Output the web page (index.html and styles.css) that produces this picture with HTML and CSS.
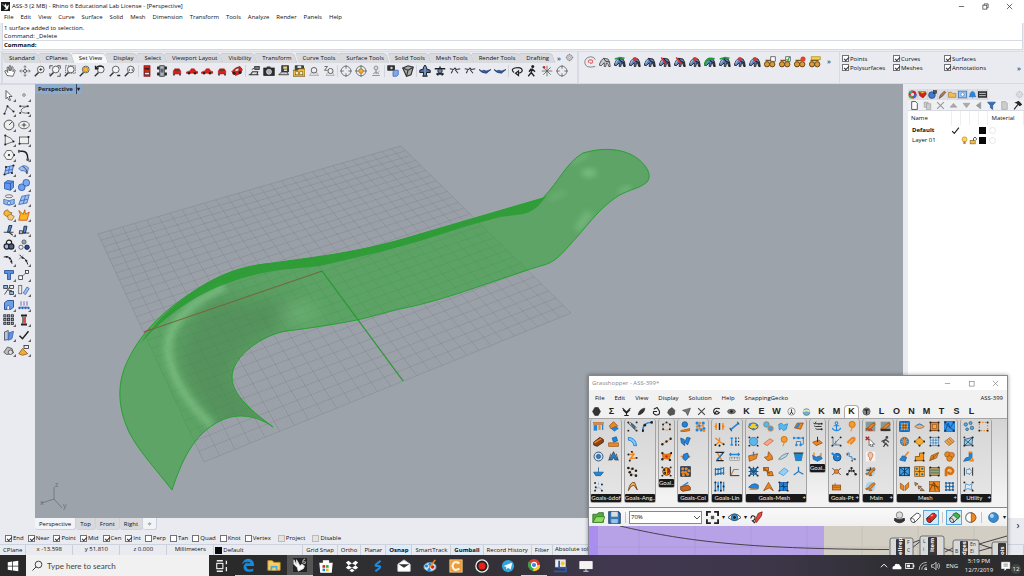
FILE: index.html
```html
<!DOCTYPE html>
<html lang="en">
<head>
<meta charset="utf-8">
<title>ASS-3 (2 MB) - Rhino 6 Educational Lab License - [Perspective]</title>
<link rel="stylesheet" href="styles.css">
</head>
<body>
<div class="desktop">
  <main class="rhino">
    <header class="titlebar">
      <span class="icon" data-icon="rhino"></span>
      <span class="grow">ASS-3 (2 MB) - Rhino 6 Educational Lab License - [Perspective]</span>
      <div class="window-buttons"><button aria-label="Minimize" data-icon="min"></button><button aria-label="Restore" data-icon="restore"></button><button aria-label="Close" data-icon="close"></button></div>
    </header>
    <nav class="menu">
      <button>File</button><button>Edit</button><button>View</button><button>Curve</button><button>Surface</button><button>Solid</button><button>Mesh</button><button>Dimension</button><button>Transform</button><button>Tools</button><button>Analyze</button><button>Render</button><button>Panels</button><button>Help</button>
    </nav>
    <section class="command">
      <div class="history">1 surface added to selection.<br>Command: _Delete</div>
      <div class="prompt"><label for="cmd">Command:</label><input id="cmd" type="text"></div>
    </section>
    <section class="toolbars">
      <div class="toolbar-main">
        <div class="tabs">
          <button>Standard</button><button>CPlanes</button><button class="active">Set View</button><button>Display</button><button>Select</button><button>Viewport Layout</button><button>Visibility</button><button>Transform</button><button>Curve Tools</button><button>Surface Tools</button><button>Solid Tools</button><button>Mesh Tools</button><button>Render Tools</button><button>Drafting</button>
          <button class="more">»</button><button class="more" aria-label="Options" data-icon="gear"></button>
        </div>
        <div class="tool-row" data-icons="hand pan zoom zoomext zoomwin zoomsel undoview zoomout zoom1 | cartop wheels carfront carside carside carfront car3d | projector camera save savefolder cone cone2 | target targety lamp | camcube cubewire | planetop planefront planeside planeside jet jet | rotate walk star target"></div>
      </div>
      <div class="toolbar-gh tool-row" data-icons="rhinored hopper hopg hopr hopb hopx hopx hopr hopbig hopg hopr hopr gecko geckoc geckor geckoy"></div>
      <span class="chevrons">»</span>
      <fieldset class="filters">
        <label><input type="checkbox" checked>Points</label><label><input type="checkbox" checked>Curves</label><label><input type="checkbox" checked>Surfaces</label>
        <label><input type="checkbox" checked>Polysurfaces</label><label><input type="checkbox" checked>Meshes</label><label><input type="checkbox" checked>Annotations</label>
      </fieldset>
      <span class="chevrons low">»</span>
    </section>
    <section class="workspace">
      <aside class="sidebar" data-icons="arrow point polyline curve circle ellipse arc rect polygon fillet patch sweep cube spheres cylinder plane puzzle explode trim split union group bend blend text scale array flow solid project grid column mirror check sheets paint"></aside>
      <div class="center">
        <div class="viewport">
          <svg class="scene" viewBox="35 84 868 434" preserveAspectRatio="xMidYMid slice" aria-label="Perspective view">
            <defs>
              <clipPath id="body"><path id="bodyPath" d="M172 490 C154 467 138 450 129 432 C116 404 118 380 128 360 C142 330 169 305 207 283 C230 270 250 265 273 263 L323 256 C356 251 388 244 420 234 L543 198 C560 180 566 163 583 153 C597 149 614 147 630 154 C643 160 654 174 647 182 C639 189 630 189 618 196 C600 208 591 221 577 237 C565 250 558 260 547 264 C502 277 448 300 400 309 C386 312 371 317 357 320 C332 325 310 328 287 331 C264 334 232 356 232 377 C232 395 253 412 273 427 C258 416 238 412 220 421 C193 434 181 463 172 490Z"/></clipPath>
              <filter id="soft" x="-50%" y="-50%" width="200%" height="200%"><feGaussianBlur stdDeviation="5"/></filter>
              <filter id="soft2" x="-50%" y="-50%" width="200%" height="200%"><feGaussianBlur stdDeviation="9"/></filter>
              <filter id="soft3" x="-50%" y="-50%" width="200%" height="200%"><feGaussianBlur stdDeviation="3"/></filter>
            </defs>
            <g id="grid"></g>
            <use href="#bodyPath" fill="#24a42a" fill-opacity=".53"/>
            <g clip-path="url(#body)">
              <path d="M212 300 Q176 330 182 365 Q188 395 220 425 L275 430 L232 380 Q232 350 275 332 L300 300 Z" fill="#4c7650" opacity=".38" filter="url(#soft2)"/>
              <path d="M225 286 Q165 315 168 352 Q174 390 212 426" fill="none" stroke="#98d59b" stroke-width="8" opacity=".5" filter="url(#soft3)"/>
              <ellipse cx="298" cy="313" rx="20" ry="9" fill="#98d59b" opacity=".34" filter="url(#soft2)"/>
              <ellipse cx="589" cy="173" rx="8" ry="4" fill="#98d59b" opacity=".55" filter="url(#soft3)"/>
              <path d="M549 199 L566 192" stroke="#98d59b" stroke-width="2" opacity=".6" filter="url(#soft3)"/>
              <path d="M577 230 L590 212" stroke="#98d59b" stroke-width="8" opacity=".4" filter="url(#soft3)"/>
              <path d="M619 193 L630 187" stroke="#98d59b" stroke-width="4" opacity=".6" filter="url(#soft3)"/>
              <path d="M571 163 L588 154" stroke="#98d59b" stroke-width="3" opacity=".6" filter="url(#soft3)"/>
            </g>
            <path d="M140 344 C158 318 178 300 207 283 C230 270 250 265 273 263 L323 256 C356 251 388 244 420 234 L543 198 L547 195 C541 203 536 211 523 214 L500 217 L467 226 L420 241 L380 252 L320 266 L280 270 C245 275 220 285 197 297 C172 312 155 327 140 344Z" fill="#249b2c" fill-opacity=".78"/>
            <use href="#bodyPath" fill="none" stroke="#28a032" stroke-width="1"/>
            <path d="M322 271 L144 332" stroke="#78653a" fill="none"/><path d="M151 329 L144 332" stroke="#a54b45"/>
            <path d="M322 271 L403 381" stroke="#229b2c" fill="none" stroke-width="1.2"/>
            <g stroke="#6c7075" stroke-width=".8" fill="none"><path d="M54 499V487M54 499L42 503M54 499L62 508"/></g>
            <g class="axis"><text x="55" y="487">z</text><text x="40" y="505">x</text><text x="63" y="508">y</text></g>
          </svg>
          <button class="view-title"><span>Perspective</span><i>▾</i></button>
        </div>
        <div class="view-tabs"><button class="active">Perspective</button><button>Top</button><button>Front</button><button>Right</button><button class="active" aria-label="New viewport">✧</button></div>
      </div>
      <aside class="layers">
        <div class="panel-tabs"><div class="panel-tab-list" data-icons="wheel shield sphereg brush folder image bell kbd"></div><button class="panel-gear" aria-label="Panel options" data-icon="gear"></button></div>
        <div class="panel-tools" data-icons="page copy cross up down left filter pageg hammer"></div>
        <table>
          <thead><tr><th class="name">Name</th><th></th><th></th><th></th><th></th><th class="material">Material</th></tr></thead>
          <tbody>
            <tr class="current"><td>Default</td><td data-icon="check"></td><td></td><td></td><td><i class="swatch"></i></td><td><i class="dot"></i></td></tr>
            <tr><td>Layer 01</td><td></td><td data-icon="bulb"></td><td data-icon="lock"></td><td><i class="swatch"></i></td><td><i class="dot"></i></td></tr>
          </tbody>
        </table>
        <button class="scroll-right" aria-label="Scroll right">›</button>
      </aside>
    </section>
    <section class="osnap">
      <label><input type="checkbox" checked>End</label><label><input type="checkbox" checked>Near</label><label><input type="checkbox" checked>Point</label><label><input type="checkbox" checked>Mid</label><label><input type="checkbox" checked>Cen</label><label><input type="checkbox" checked>Int</label><label><input type="checkbox">Perp</label><label><input type="checkbox">Tan</label><label><input type="checkbox">Quad</label><label><input type="checkbox">Knot</label><label><input type="checkbox">Vertex</label><label class="wide"><input type="checkbox" disabled>Project</label><label class="wide"><input type="checkbox" disabled>Disable</label>
    </section>
    <footer class="status">
      <button class="cplane">CPlane</button><span class="cell">x -13.598</span><span class="cell">y 51.810</span><span class="cell">z 0.000</span><span class="cell">Millimeters</span><button class="layer"><i class="swatch"></i>Default</button><button>Grid Snap</button><button>Ortho</button><button>Planar</button><button class="on">Osnap</button><button>SmartTrack</button><button class="on">Gumball</button><button>Record History</button><button>Filter</button><span class="rest">Absolute tolerance</span>
    </footer>
  </main>

  <section class="gh">
    <header class="gh-title"><span class="grow">Grasshopper - ASS-399*</span><div class="window-buttons"><button aria-label="Minimize" data-icon="min"></button><button aria-label="Maximize" data-icon="max"></button><button aria-label="Close" data-icon="close"></button></div></header>
    <nav class="gh-menu"><button>File</button><button>Edit</button><button>View</button><button>Display</button><button>Solution</button><button>Help</button><button>SnappingGecko</button><span class="grow"></span><span>ASS-399</span></nav>
    <div class="gh-tabs">
      <button data-icon="hex"></button><button>Σ</button><button data-icon="sprout"></button><button data-icon="leafd"></button><button data-icon="swirl"></button><button data-icon="blob"></button><button data-icon="tri"></button><button data-icon="cut"></button><button data-icon="swirl2"></button><button data-icon="eyed"></button><button>K</button><button>E</button><button>W</button><button data-icon="person"></button><button data-icon="globe"></button><button>K</button><button>M</button><button class="active">K</button><button data-icon="stamp"></button><button>L</button><button>O</button><button>N</button><button>M</button><button>T</button><button>S</button><button>L</button>
    </div>
    <div class="ribbon">
      <div class="group two"><div class="cells" data-icons="hang roof beam ramp ring frame boat - dots -"></div><button>Goals-6dof</button></div>
      <div class="group two"><div class="cells" data-icons="angle bow arcb - zig - steps - arch -"></div><button>Goals-Ang..</button></div>
      <div class="group one"><div class="cells" data-icons="ringd lined pillow bug"></div><button>Goal..</button></div>
      <div class="group two"><div class="cells" data-icons="ballbar molecules folded - cubearrow - mosaic - box -"></div><button>Goals-Col</button></div>
      <div class="group two"><div class="cells" data-icons="spread segment yjoint vbars hourglass ruler fence graph grille -"></div><button>Goals-Lin</button></div>
      <div class="group four"><div class="cells" data-icons="blobY hexes fold sheet bubble eraser balloon netb slab flame wing bucket meshb blocks soap spike rollb roofo squareb -"></div><button><span>Goals-Mesh</span><b>+</b></button></div>
      <div class="group one"><div class="cells" data-icons="anglesk floor pinfloor"></div><button>Goal..</button></div>
      <div class="group two"><div class="cells" data-icons="anchor balloon anchorv magnet coil springs knot dome brick -"></div><button><span>Goals-Pt</span><b>+</b></button></div>
      <div class="group two"><div class="cells" data-icons="roo rooN clickx runner ear - roobar - rooplain -"></div><button><span>Main</span><b>+</b></button></div>
      <div class="group four"><div class="cells" data-icons="checker saucer oframe meshb2 wheelo diamond gridb weave broom lshape leafo trio xmesh quads striped spiral fold2 tris mesho nodes"></div><button><span>Mesh</span><b>+</b></button></div>
      <div class="group two"><div class="cells" data-icons="pts dashed cross4 - stairs - boxarr - hull -"></div><button><span>Utility</span><b>+</b></button></div>
    </div>
    <div class="gh-tools">
      <button aria-label="Open" data-icon="open"></button><button aria-label="Save" data-icon="save2"></button><i class="rule"></i>
      <select aria-label="Zoom"><option>70%</option></select>
      <button aria-label="Zoom extents" data-icon="extents"></button><i class="drop">▾</i><button aria-label="Preview" data-icon="eye"></button><i class="drop">▾</i><button aria-label="Sketch" data-icon="pencil"></button>
      <span class="grow"></span>
      <button aria-label="No preview" data-icon="nopreview"></button><button aria-label="Wireframe" data-icon="wirecan"></button><button class="sel" aria-label="Shaded" data-icon="redcan"></button><i class="rule"></i><button class="sel" aria-label="Selected only" data-icon="greencan"></button><button aria-label="Document preview" data-icon="half"></button><i class="rule"></i><button aria-label="Mesh quality" data-icon="blueball"></button><i class="drop">▾</i>
    </div>
    <div class="canvas">
      <svg viewBox="589 526 418 29" preserveAspectRatio="xMinYMin slice" aria-label="Definition canvas">
        <path d="M589 526H1007V555H589Z" fill="#d2cec3"/>
        <path d="M589 526H824V555H589Z" fill="#b7a2e8"/><path d="M589 526H598V555H589Z" fill="#a98ef0"/>
        <path d="M639 526V555M695 526V555M751 526V555M807 526V555M598 547H824" stroke="#aa96d8" stroke-width=".6"/>
        <path d="M862 526V555M918 526V555M974 526V555M824 547H1007" stroke="#c2beb2" stroke-width=".6"/>
        <g stroke="#454148" fill="none"><path d="M620 526C680 540 740 549 889 549.500M912 543L920 540M912 548L922 540M943 548L954 552M945 552L953 548M979 544L1007 536M979 544L994 549M979 551L1007 543"/></g>
        <g fill="#d9d9d9" stroke="#555" stroke-width=".8"><rect x="890" y="538" width="23" height="22" rx="2"/><rect x="920" y="536" width="24" height="22" rx="2"/><rect x="953" y="540" width="26" height="22" rx="2"/><rect x="992" y="542" width="20" height="20" rx="2"/></g>
        <g fill="#383838"><rect x="896" y="539" width="9" height="20" rx="1"/><rect x="928" y="537" width="9" height="20" rx="1"/><rect x="960" y="541" width="8" height="20" rx="1"/><rect x="998" y="543" width="8" height="20" rx="1"/></g>
        <g class="node"><text transform="translate(902 555) rotate(-90)">ellrep</text><text transform="translate(934 552) rotate(-90)">Item</text><text transform="translate(966 555) rotate(-90)">dges</text><text transform="translate(1004 555) rotate(-90)">ois</text></g>
        <g class="port"><text x="907" y="544">F</text><text x="907" y="552">C</text><text x="923" y="543">L</text><text x="923" y="551">i</text><text x="970" y="546">En</text><text x="970" y="553">Ei</text><text x="955" y="553">B</text></g>
      </svg>
    </div>
  </section>

  <footer class="taskbar">
    <button class="start" aria-label="Start" data-icon="windows"></button>
    <label class="search"><span class="icon" data-icon="lens"></span><input type="text" aria-label="Search" placeholder="Type here to search"></label>
    <div class="apps">
      <button aria-label="Task view" data-icon="taskview"></button><button class="open" aria-label="Edge" data-icon="edge"></button><button class="open" aria-label="File Explorer" data-icon="explorer"></button><button class="open current" aria-label="Rhino" data-icon="rhino6"></button><button aria-label="Store" data-icon="store"></button><button aria-label="Dropbox" data-icon="dropbox"></button><button aria-label="Swift" data-icon="bolt"></button><button aria-label="Mail" data-icon="mail"></button><button aria-label="Paint" data-icon="palette"></button><button aria-label="Camtasia" data-icon="camtasia"></button><button aria-label="Recorder" data-icon="record"></button><button aria-label="Telegram" data-icon="telegram"></button><button class="open" aria-label="Chrome" data-icon="chrome"></button><button aria-label="Python" data-icon="python"></button><button aria-label="Display" data-icon="monitor"></button>
    </div>
    <span class="grow"></span>
    <div class="tray"><button aria-label="Hidden icons" data-icon="caret"></button><button aria-label="OneDrive" data-icon="cloud"></button><button aria-label="Battery" data-icon="battery"></button><button aria-label="Network" data-icon="wifi"></button><button aria-label="Volume" data-icon="volume"></button><button class="lang">ENG</button><button class="clock">5:19 PM<br>12/7/2019</button><button class="notice" aria-label="12 notifications"><span class="icon" data-icon="note"></span><b>12</b></button></div>
  </footer>
</div>
<script src="app.js"></script>
</body>
</html>
```

FILE: styles.css
```css
* { box-sizing: border-box; }
html, body { margin: 0; height: 100%; }
body { font: 6px/8px "Open Sans", "Noto Sans", sans-serif; color: #0c0e12; overflow: hidden; }
button { font: inherit; color: inherit; background: none; border: 0; padding: 0; margin: 0; white-space: nowrap; }
input, select { font: inherit; color: inherit; }
i { font-style: normal; }
svg { display: block; }
.grow { flex: 1; }
.desktop { position: relative; display: flex; flex-direction: column; height: 100vh; min-height: 400px; }
.rhino { flex: 1; min-height: 0; display: flex; flex-direction: column; background: #e9ebf1; }
.glyph { width: 12px; height: 12px; margin: auto; flex: none; }

.titlebar { display: flex; align-items: center; height: 12px; padding: 0 3px 0 1px; background: #fff; white-space: nowrap; }
.titlebar .glyph { width: 9px; height: 9px; margin-right: 2px; }
.window-buttons { display: flex; }
.window-buttons button { width: 24px; height: 11px; display: flex; }
.window-buttons .glyph, .titlebar .window-buttons .glyph { width: 7px; height: 7px; margin: auto; }
.menu { display: flex; gap: 7px; height: 11px; padding-left: 4px; background: #fff; }
.menu button { line-height: 11px; }

.command { margin: 0 1px 1px 2px; border: 1px solid #d3d8e3; border-top: 0; background: #fff; white-space: nowrap; }
.history { padding: 1px 0 0 1px; line-height: 8px; border-bottom: 1px solid #d7dbe4; }
.prompt { display: flex; padding-left: 1px; font-weight: bold; height: 8px; }
.prompt input { flex: 1; border: 0; padding: 0 2px; height: 7px; outline: 0; background: none; }

.toolbars { display: flex; height: 33px; border-top: 1px solid #d9dde6; border-bottom: 1px solid #d5dae4; }
.toolbar-main { width: 578px; border-left: 2px solid #d6dbe5; margin-left: 1px; border-right: 2px solid #d6dbe5; }
.tabs { display: flex; height: 11px; }
.tabs button { position: relative; z-index: 0; height: 11px; padding: 0 5px 0 6px; line-height: 12px; }
.tabs button::before { content: ""; position: absolute; z-index: -1; inset: 1px 0 0; background: #d9dade; border: 1px solid #c9ccd3; border-width: 1px 1px 0 0; border-radius: 2px 4px 0 0; transform: skewX(18deg); }
.tabs .active::before { background: #f7f8fa; }
.tabs .more { padding: 0 1px 0 3px; font-size: 8px; }
.tabs .more::before { display: none; }
.tabs .more .glyph { width: 9px; height: 9px; }
.tool-row { display: flex; align-items: center; gap: 1px; }
.tool-row button { width: 14px; height: 15px; display: flex; }
.tool-row .sep { width: 1px; height: 12px; background: #cfd3dc; }
.toolbar-gh { padding-left: 4px; height: 19px; }
.chevrons { padding: 5px 8px 0 5px; font-size: 8px; }
.chevrons.low { padding-top: 12px; margin-left: auto; padding-right: 3px; }
.filters { border: 0; border-left: 1px solid #d5dae4; margin: 0; padding: 2px 0 0 2px; display: grid; grid-template-columns: repeat(3, 51px); align-content: start; min-width: 0; }
.filters label { height: 9px; }
label { display: flex; align-items: center; gap: 1px; white-space: nowrap; }
input[type="checkbox"] { appearance: none; width: 7px; height: 7px; margin: 0; border: 1px solid #70737a; background: #fff; display: grid; }
input[type="checkbox"]:checked::before { content: ""; width: 4px; height: 2px; margin: 1px 0 0 1px; border: solid #333; border-width: 0 0 1px 1px; transform: rotate(-45deg); }
input[type="checkbox"]:disabled { border-color: #bbb; background: #e3e3e3; }

.workspace { flex: 1; min-height: 0; display: flex; }
.sidebar { width: 35px; padding: 2px 3px 0 1px; display: grid; grid-template-columns: 15px 15px; grid-auto-rows: 15px; align-content: start; border-top: 1px solid #d5dae4; }
.sidebar button { position: relative; display: flex; }
.sidebar button::after { content: ""; position: absolute; right: 0; bottom: 0; border: solid transparent; border-width: 3px 0 0 3px; border-right: 0; border-bottom: 3px solid #666; border-top: 0; }
.center { flex: 1; min-width: 0; display: flex; flex-direction: column; }
.viewport { position: relative; flex: 1; min-height: 0; background: #9da3ab; overflow: hidden; }
.scene { width: 100%; height: 100%; }
.axis { font-size: 7px; fill: #696d72; }
.view-title { position: absolute; top: 0; left: 0; display: flex; gap: 3px; height: 10px; padding: 0 1px 0 3px; line-height: 10px; background: #8eabcb; font-weight: bold; color: #17202c; }
.view-title i { border-left: 1px solid #345; }
.view-tabs { display: flex; height: 14px; }
.view-tabs button { height: 12px; line-height: 12px; padding: 0 4px; background: #d9dade; border: 1px solid #cdd1d9; border-top: 0; border-left: 0; border-radius: 0 0 3px 3px; }
.view-tabs .active { background: #f3f4f7; }

.layers { width: 121px; padding: 5px 0 0 5px; display: flex; flex-direction: column; }
.panel-tabs { display: flex; justify-content: space-between; height: 11px; }
.panel-tab-list { display: flex; }
.panel-tabs button { width: 10px; display: flex; background: #dcdee3; border: 1px solid #cfd2d9; border-width: 0 1px 0 0; }
.panel-tabs .panel-gear { background: none; border: 0; opacity: .4; }
.panel-tabs .glyph { width: 9px; height: 9px; }
.panel-tools { display: flex; height: 11px; background: #eff0f3; border-bottom: 1px solid #d8dbe1; }
.panel-tools button { width: 13px; display: flex; }
.panel-tools .glyph { width: 9px; height: 9px; }
table { border-collapse: collapse; table-layout: fixed; width: 100%; background: #fff; }
th { font-weight: normal; text-align: left; height: 14px; width: 9px; padding: 0; border-right: 1px solid #eceef1; }
th.name { width: 43px; padding-left: 3px; }
th.material { width: auto; padding-left: 4px; }
td { height: 10px; padding: 0; line-height: 8px; white-space: nowrap; }
td:first-child { padding-left: 4px; }
td .glyph { width: 9px; height: 9px; }
.current { font-weight: bold; }
.swatch { display: block; width: 7px; height: 7px; background: #090909; margin-left: 1px; }
.dot { display: block; width: 7px; height: 7px; border: 1px solid #e6e6e6; border-radius: 50%; margin-left: 2px; }
.layers table { flex: none; }
.layers::after { content: ""; order: 1; flex: 1; background: #fff; }
.scroll-right { order: 2; height: 14px; align-self: flex-end; width: 12px; font-size: 10px; }

.osnap { display: flex; gap: 4px; height: 12px; padding-left: 5px; align-items: center; }
.osnap .wide { margin-left: 3px; }
.status { display: flex; height: 11px; border-top: 1px solid #cdd3de; white-space: nowrap; overflow: hidden; }
.status > * { border-right: 1px solid #c9cfdb; padding: 0 3px; line-height: 9px; text-align: center; }
.status .cplane { padding: 0 3px; }
.status .cell { width: 47px; }
.status .layer { width: 89px; display: flex; align-items: center; gap: 1px; padding: 0; }
.status .on { font-weight: bold; background: #dfebf6; }
.status .rest { flex: 1; text-align: left; padding-left: 2px; }

.gh { position: absolute; right: 16px; bottom: 21px; width: 420px; max-width: 96%; background: #f1f1f2; border: 1px solid #85888e; border-bottom: 0; box-shadow: 0 0 4px #0006; display: flex; flex-direction: column; overflow: hidden; }
.gh-title { display: flex; height: 14px; padding-left: 3px; align-items: center; background: #fff; color: #85878c; }
.gh-title .window-buttons button { width: 24px; }
.gh-title .window-buttons { opacity: .6; }
.gh-menu { display: flex; height: 15px; line-height: 16px; gap: 10px; padding: 0 4px 0 6px; }
.gh-tabs { display: flex; height: 13px; }
.gh-tabs button { width: 15px; height: 13px; display: flex; justify-content: center; font: bold 9px/13px "Liberation Sans", sans-serif; color: #222; }
.gh-tabs .active { background: #fdfdfd; border: 1px solid #aaa; border-bottom: 0; border-radius: 4px 4px 0 0; line-height: 11px; }
.gh-tabs .glyph { width: 9px; height: 9px; }
.ribbon { display: flex; align-items: flex-start; gap: 2px; padding: 0 1px; height: 90px; background: linear-gradient(#d4d4d4, #f3f3f3 90%); border-top: 1px solid #a5a5a5; border-bottom: 1px solid #888; }
.group { border: 1px solid #a3a3a3; border-top: 0; border-radius: 3px; background: linear-gradient(#d6d6d6, #e6e6e6); flex: none; }
.cells { display: grid; grid-auto-rows: 15px; height: 75px; }
.one { width: 17px; } .two { width: 32px; } .four { width: 62px; }
.one .cells { grid-template-columns: 1fr; height: auto; }
.two .cells { grid-template-columns: 1fr 1fr; }
.four .cells { grid-template-columns: repeat(4, 1fr); }
.cells button { display: flex; min-width: 0; }
.cells .glyph { width: 11px; height: 11px; }
.group > button { display: flex; justify-content: center; width: 100%; height: 8px; background: #191919; color: #f1f1f1; font: 6px/7px Lato, sans-serif; border-radius: 1px; }
.group > button span { flex: 1; text-align: center; }
.group > button b { font-weight: normal; }
.gh-tools { display: flex; align-items: center; height: 18px; padding: 0 0 0 1px; background: linear-gradient(#fafafa, #efefef); }
.gh-tools button { width: 16px; height: 15px; display: flex; }
.gh-tools .glyph { width: 13px; height: 13px; }
.gh-tools .sel { border: 1px solid #5aaade; background: #d6eafa; }
.gh-tools .rule { width: 1px; height: 11px; background: #c5c5c5; margin: 0 3px; }
.gh-tools .drop { width: 6px; text-align: center; line-height: 8px; }
.gh-tools select { appearance: none; width: 73px; height: 13px; border: 1px solid #888; padding: 0 0 0 1px; background: linear-gradient(45deg, transparent 35%, #555 35%, #555 65%, transparent 65%) 64px 4px / 3px 3px no-repeat, linear-gradient(-45deg, transparent 35%, #555 35%, #555 65%, transparent 65%) 67px 4px / 3px 3px no-repeat, #fff; margin-right: 2px; }
.canvas { height: 29px; background: #d2cec3; }
.canvas svg { width: 100%; height: 29px; }
.node { font-size: 6px; font-weight: bold; fill: #fff; }
.port { font-size: 5px; fill: #333; }

.taskbar { position: relative; display: flex; flex: none; height: 21px; color: #f1f1f1; background: linear-gradient(90deg, #292929 20%, #343238 50%, #413850 60%, #3d3649 75%, #2d2d2f 90%); }
.taskbar button { display: flex; align-items: center; }
.start { width: 26px; }
.search { width: 183px; background: #f1f1f1; color: #444; padding-left: 5px; gap: 4px; font: 8px/10px Lato, sans-serif; }
.search input { flex: 1; min-width: 0; border: 0; background: none; padding: 0; outline: 0; }
.search input::placeholder { color: #444; opacity: 1; }
.apps { display: flex; }
.apps button { width: 26px; }
.apps .open { border-bottom: 1px solid #f0d68a; }
.apps .current { background: #555; }
.apps .glyph { width: 14px; height: 14px; }
.tray { display: flex; padding-right: 3px; }
.tray button { width: 13px; }
.tray .glyph { width: 10px; height: 10px; }
.tray .lang { width: 20px; justify-content: center; }
.tray .clock { width: 34px; justify-content: center; line-height: 9px; text-align: center; }
.tray .notice { position: relative; width: 25px; padding-left: 5px; }
.notice b { position: absolute; right: 0; bottom: 2px; width: 10px; height: 10px; border-radius: 50%; background: #444; line-height: 10px; font-weight: normal; }
```

FILE: app.js
```js
const B = '#1f86e0', O = '#ee8722', K = '#222', G = '#777', N = '#3563b8', L = '#9fbfec', RD = '#dd1f17';
const p = (d, f = 'none', s = K, w = 1) => `<path d="${d}" fill="${f}" stroke="${s}" stroke-width="${w}"/>`;
const c = (x, y, r, f = 'none', s = K, w = 1) => `<circle cx="${x}" cy="${y}" r="${r}" fill="${f}" stroke="${s}" stroke-width="${w}"/>`;
const r = (x, y, w, h, f = 'none', s = K, sw = 1) => `<rect x="${x}" y="${y}" width="${w}" height="${h}" fill="${f}" stroke="${s}" stroke-width="${sw}"/>`;
const d = (pts, f = K, q = 1.4) => pts.map(([x, y]) => c(x, y, q, f, 'none')).join('');
const corners = d([[2, 2], [14, 2], [2, 14], [14, 14]]);
const lens = c(9, 6, 4.5, '#f4f4f4', '#555', 1.2) + p('M6 10L1 15', 'none', '#333', 2);
const hopBody = 'M0 12L3 6L6 3L12 4L14 8L15 14L13 14L12 11L10 9L9 14L7 14L7 9L3 13Z';
const hop = p(hopBody, '#c5c7cb', '#333') + p('M6 3L9 7L14 8', 'none', '#333', 1.2);
const hopBlue = p(hopBody, '#5d83c6', '#222', 1.2) + p('M9 7L13 9L14 14M6 3L9 7', 'none', '#222', 1.6) + p('M2 10L5 5', 'none', '#a9c4ee', 1.4);
const gecko = c(4, 11, 3.5, '#d79a3c', '#5f3c0c', 1.2) + c(11, 11, 3.5, '#d79a3c', '#5f3c0c', 1.2) + p('M2 6H13', 'none', '#7b5318', 2);
const roo = p('M1 11Q5 11 7 7Q10 3 12 4L13 2L15 5L12 7Q11 10 8 11L10 14H6L6 11L2 13Z', O, '#7a3d09', .8);
const can = (f, g) => p('M2 9L9 3Q13 2 14 6L13 8L7 14Q2 15 2 9Z', f, K) + p('M2 9Q7 8 7 14', 'none', g);

const icons = {
  rhino: r(0, 0, 16, 16, '#191919', 'none') + p('M2 3L6 7L8 3L10 8L14 5L12 13L6 14L9 11Z', '#fff', '#fff', .5),
  min: p('M2 8H14', 'none', '#333', 1.6), max: r(3, 3, 11, 11, 'none', '#333', 1.6), restore: r(2, 5, 9, 9, 'none', '#333', 1.6) + p('M5 5V2H14V11H11', 'none', '#333', 1.6), close: p('M2 2L14 14M14 2L2 14', 'none', '#333', 1.6),
  gear: c(8, 8, 5, 'none', G, 1.5) + c(8, 8, 2, 'none', G) + p('M8 1V4M8 12V15M1 8H4M12 8H15', 'none', G),
  hand: p('M4 14L1 8L3 7L5 10L4 3L6 3L7 8V1H9L9 8L11 2L12 3L12 9L14 6L15 7L12 15Z', '#fff', '#444'),
  pan: p('M8 1V15M1 8H15M6 3L8 1L10 3M6 13L8 15L10 13M3 6L1 8L3 10M13 6L15 8L13 10', 'none', '#666') + c(8, 8, 2, '#fff', '#333'),
  zoom: lens + p('M7 6H11M9 4V8'), zoomout: lens + p('M11 14H15', 'none', K, 2), zoom1: lens + p('M7 5V8M11 5V8'),
  zoomext: lens + p('M1 5V1H5M11 1H15V5M15 11V15H11M1 11V13', 'none', '#444', 1.2),
  zoomwin: lens + `<rect x="2" y="1" width="13" height="10" fill="none" stroke="#555" stroke-dasharray="2 1"/>`,
  zoomsel: lens + c(9, 6, 3, '#f6bd26', '#c07a00'), undoview: lens + p('M2 5Q6 -1 13 3M2 1V5H6', 'none', K, 1.8),
  cartop: r(4, 1, 8, 14, RD, '#8d0b06') + r(5, 4, 6, 2, '#222', 'none') + r(5, 10, 6, 3, '#eee', K, .7),
  wheels: r(5, 1, 6, 14, '#aab3bd', K) + p('M3 2V6M13 2V6M3 10V14M13 10V14', 'none', K, 3) + r(6, 5, 4, 5, '#5b656f', 'none'),
  carfront: p('M3 12V8L5 5H11L13 8V12Z', RD, '#a00f08', .6) + r(5, 6, 6, 2, '#70302c', 'none') + p('M4 12V14M12 12V14', 'none', K, 2),
  carside: p('M0 10Q2 8 5 8L7 5H11L13 8L16 9V11H0Z', RD, '#a00f08', .6) + d([[4, 11], [12, 11]], K, 1.7),
  car3d: p('M1 9L6 4L12 2L15 6L13 11L6 14Z', RD, '#a00f08') + p('M6 5L11 4L10 8L5 9Z', '#eadedd', '#6d0a05', .7) + d([[4, 11], [12, 10]], K, 2),
  projector: p('M1 13H14M3 13L6 9H13L12 13', '#ddd', '#333', 1.4) + r(9, 2, 6, 4, '#777', K) + p('M9 4L5 6'),
  camera: r(1, 4, 14, 10, '#2c2c2c', K) + r(5, 2, 5, 3, '#333', 'none') + c(8, 9, 3.4, '#a9b1ba', '#eee', .8),
  save: p('M1 13H14L12 9H5Z', '#ccc', K) + r(5, 1, 9, 8, '#445', K) + r(7, 2, 5, 3, '#eed66b', 'none') + r(8, 6, 4, 2, '#ddd', 'none'),
  savefolder: p('M3 1H14V8H3Z', '#3f4143', K) + r(6, 1, 5, 3, '#ddd', 'none') + p('M0 7H6L8 5H16V15H0Z', '#efbd45', '#69500d') + r(3, 9, 4, 4, '#f9ead0', '#69500d', .7) + r(9, 9, 4, 4, '#f9ead0', '#69500d', .7),
  cone: p('M5 9L2 14H14L11 9', '#ddd', '#aaa') + c(8, 7, 3.7, '#f0f0f0', '#555', 1.2),
  cone2: p('M6 10L4 14H15L13 10', '#ddd', '#aaa') + c(10, 8, 3.4, '#f0f0f0', '#555', 1.2) + p('M2 2H6L2 7H6', 'none', '#444'),
  target: c(8, 8, 6.5, 'none', '#555') + p('M8 0V5M8 11V16M0 8H5M11 8H16', 'none', '#555'),
  targety: c(8, 8, 6.5, 'none', '#555') + c(8, 8, 3, '#eeb533', '#a87309') + p('M8 0V5M8 11V16M0 8H5M11 8H16', 'none', '#555'),
  lamp: p('M3 14H13M8 12V6M4 12L8 9L12 12', 'none', '#777') + c(8, 4, 2.6, '#ddd', '#777') + p('M8 12L13 8', 'none', '#cc8888'),
  camcube: r(1, 1, 9, 6, '#333', K) + c(6, 4, 1.6, '#ccc', 'none') + p('M8 9L10 7H15V13L13 15H8Z', '#82a9e4', N),
  cubewire: p('M1 4L8 1L15 3L12 13L6 15Z', '#aaa', '#333', 1.5) + p('M1 4L8 7L15 3M8 7L6 15', 'none', '#333', 1.4),
  planetop: p('M8 0L10 3V5L15 7V10L10 10V13L11 15H5L6 13V10L1 10V7L6 5V3Z', '#4c6ba8', '#111', 1.2) + p('M8 2V13', 'none', '#c4d1e8'),
  planefront: p('M1 5H15M8 2V12M3 12H13', 'none', '#222', 2) + c(8, 8, 3, '#6b86b5', '#111') + p('M5 14V11M11 14V11', 'none', K, 2),
  planeside: p('M1 5L6 6L8 4L10 6L15 5M5 7L3 11M8 6L12 11', 'none', '#334', 1.4),
  jet: p('M0 6Q3 11 10 11L16 6L10 8L6 7L4 8Z', '#315ea9', '#122b5d', .8),
  rotate: p('M4 10Q-1 6 5 4Q14 2 15 7Q15 10 10 11M10 8V14L6 11Z', 'none', K, 1.6),
  walk: c(9, 2, 2, K, 'none') + p('M8 5L7 10L3 15M7 10L11 15M8 5L12 9M7 5L4 9', 'none', K, 1.8),
  star: p('M8 1V15M1 8H15M3 3L13 13M13 3L3 13', 'none', '#555') + c(4, 3, 1.7, RD, 'none'),
  rhinored: p('M15 14Q2 17 1 9Q1 2 9 1Q14 1 15 5', 'none', '#666', 1) + p('M6 9Q5 5 9 5Q13 6 11 9Q8 11 8 8', 'none', '#e0605c', 1.4),
  hopper: hop, hopg: hopBlue + p('M1 4L8 2L14 3', 'none', '#24a33b', 2), hopr: hopBlue + c(8, 4, 2.6, '#e03632', 'none'), hopb: hopBlue,
  hopx: hopBlue + p('M3 2L10 11', 'none', '#e02922', 2), hopbig: hopBlue + p('M1 13Q2 1 14 4', 'none', '#1b9f2e', 3),
  gecko: gecko + r(9, 1, 6, 6, '#fff', '#444'), geckoc: gecko + r(9, 1, 6, 6, '#fff', '#444') + p('M10 4L12 6L14 1', 'none', '#19a325', 1.4), geckor: gecko + c(12, 4, 3.4, '#e1432f', 'none'), geckoy: gecko + r(3, 1, 12, 4, '#f3cf4a', '#b5911d'),
  arrow: p('M4 2L12 10H8L10 15L8 15L6 11L4 13Z', '#fff', '#333'), point: c(8, 8, 1.7, '#fff', '#555'),
  polyline: p('M2 13L6 3L14 10', 'none', '#333') + d([[2, 13], [6, 3], [14, 10]]), curve: p('M3 3H13Q5 5 4 8Q4 13 14 12', 'none', '#555') + d([[3, 3], [13, 3], [3, 12], [14, 12]], '#333'),
  circle: c(8, 8, 6.5, '#eee', '#444', 1.2) + p('M8 8L12 4'), ellipse: `<ellipse cx="8" cy="8" rx="7" ry="5" fill="#eee" stroke="#444"/>` + p('M8 5V11M5 8H11'),
  arc: p('M3 14V2Q12 5 14 10Z', '#eee', '#444') + d([[3, 2], [3, 14], [14, 10]]), rect: r(2, 4, 12, 9, '#eee', '#444') + d([[2, 13], [14, 4]]),
  polygon: p('M5 2H11L15 8L11 14H5L1 8Z', '#f2f2f2', '#444') + d([[8, 8], [15, 8]]), fillet: p('M1 3H6Q13 3 13 13', 'none', K, 2) + d([[1, 3], [13, 14]], '#555', 2),
  patch: p('M4 4L14 2L12 11L2 14Z', L, N, 1.2) + p('M9 3L7 13M3 9L13 7', 'none', N) + d([[4, 4], [14, 2], [12, 12], [2, 14]]), sweep: p('M1 6Q8 -1 14 5L12 13Q10 8 4 9Z', L, N) + p('M6 3Q12 6 12 13', 'none', K),
  cube: p('M2 5L6 2L14 3V11L10 15L2 13Z', '#5f9af0', '#234c9b') + p('M2 5L10 6L14 3M10 6V15', 'none', '#234c9b'), spheres: c(5, 11, 4.5, '#6da1ef', '#234c9b') + c(11, 5, 4.5, '#77abf4', '#234c9b'),
  cylinder: p('M1 7Q8 11 15 7V13Q8 17 1 13Z', '#8eb8ef', N) + `<ellipse cx="8" cy="3" rx="5" ry="2" fill="none" stroke="#555"/>` + c(8, 12, 2, '#fff', N), plane: p('M5 3L15 1L12 12L1 14Z', L, N) + p('M10 2L7 13M3 9L13 7', 'none', N),
  puzzle: p('M2 3L6 1L8 4L12 5L10 9L5 10L1 7Z', '#f9b43c', '#9a5d05') + p('M6 9L10 7L15 10L12 15L7 14Z', '#f2cb80', '#90723e'), explode: p('M1 15L3 7L1 2L7 7L9 1L10 7L15 4L12 15Z', '#ffb421', '#c34e05'),
  trim: p('M1 11H14M8 2H12L9 11H6Z', '#4c83dc', '#234', 1.2) + p('M8 11L13 15', 'none', '#444', 1.5), split: p('M1 12H15M8 3H12L10 12H7Z', '#4c83dc', '#234', 1.2) + r(2, 9, 4, 4, '#bbb', '#333'),
  union: c(8, 5, 3.5, '#eee', K, 1.6) + c(5, 10, 3.5, '#9bb9ec', K, 1.6) + c(11, 10, 3.5, '#46619a', K, 1.6), group: c(8, 4, 2.8, '#9aa', '#445') + c(4, 11, 2.8, '#eee', '#445') + c(12, 11, 3, '#284a98', '#112'),
  bend: p('M1 4Q11 1 12 13', 'none', K, 1.3) + d([[5, 4], [9, 6], [11, 10]]), blend: p('M2 1L6 5Q11 6 13 14', 'none', K, 1.3) + p('M1 7L7 2', 'none', '#777') + d([[6, 5], [11, 9]]),
  text: p('M2 2H14V6H10V14H6V6H2Z', '#5590e5', '#1e4587'), scale: r(1, 9, 5, 5, '#fff', K) + r(10, 2, 4, 4, '#fff', K) + p('M5 10L11 5', 'none', '#555'),
  array: r(1, 2, 5, 4, '#8fb3e8', K) + r(9, 2, 5, 4, '#eee', K) + r(9, 10, 5, 4, '#8fb3e8', K) + p('M2 14L6 8L12 9M6 8L9 4'), flow: r(1, 2, 4, 11, '#eee', '#555') + p('M7 12L12 4L15 6L10 14Z', L, N),
  solid: p('M2 5L6 2H14V11L10 14H2Z', '#6d9fe7', '#234c9b', 1.2) + p('M5 14V10Q7 7 9 10V14', '#e8eefb', '#234c9b'), project: p('M2 11H14M4 3V9M8 3V9M12 3V9', 'none', '#56a', 1.2) + d([[2, 12], [6, 12], [10, 12], [14, 12]], N, 1.6),
  grid: [2, 7, 12].map(y => [2, 7, 12].map(x => r(x - 1, y - 1, 3, 3, '#97adcc', K)).join('')).join(''), column: p('M4 2H12M4 14H12', 'none', K, 2.5) + r(6, 3, 4, 10, '#ddd', '#555') + p('M8 4V12', 'none', RD, 2),
  mirror: p('M2 4L7 2V14L2 15Z', '#b9c3d2', '#345') + p('M8 5L14 3L12 13L7 15Z', '#5f92de', N), check: p('M2 9L6 13L14 3', 'none', K, 2),
  sheets: p('M1 11L6 4L12 6L14 12L5 14Z', '#bbb', '#444') + c(10, 11, 3, '#ddd', '#444'), paint: p('M1 13L6 6L13 13L6 15Z', '#f5a936', '#805511') + r(8, 2, 6, 4, '#eee', K),
  wheel: c(8, 8, 5, 'none', RD, 4) + p('M3 6Q5 2 8 3', 'none', '#2aa', 4) + p('M13 7Q14 12 9 13', 'none', '#3468e8', 4) + p('M3 9Q4 13 8 13', 'none', '#2db838', 4), shield: p('M1 3H13L15 7L9 14L3 10Z', RD, '#721', 1) + p('M1 3L8 6L14 3', '#f6ca3c', '#852'), sphereg: c(7, 9, 6, '#3d7ad4', '#112d61') + r(10, 1, 5, 5, '#555', K),
  brush: p('M2 15L4 9L11 2L14 4L8 11Z', '#b97449', '#444'), folder: p('M1 4H6L8 6H14V13H1Z', '#f2bc55', '#95691c'), image: r(1, 2, 14, 12, '#9bc5f4', '#3867a6', 1.3) + c(8, 8, 3, '#fff', '#3867a6'), bell: p('M2 12Q4 10 4 6Q8 -1 12 6Q12 10 14 12ZM7 14H9', '#2188e5', '#1461ad'), kbd: r(0, 3, 16, 10, '#333', K) + p('M2 6H14M2 10H14', 'none', '#ddd', 1.5),
  page: p('M3 1H10L13 4V15H3Z', '#fff', '#333', 1.4), copy: r(2, 2, 7, 9, '#ccc', '#999') + r(6, 5, 8, 10, '#ccc', '#999'), cross: p('M2 2L14 14M14 2L2 14', 'none', '#999', 2), up: p('M8 4L14 11H2Z', '#aaa', '#999'), down: p('M2 4H14L8 12Z', '#aaa', '#999'), left: p('M12 2V14L4 8Z', '#999', '#999'), filter: p('M1 2H15L10 8V15L6 12V8Z', '#2f70c8', '#183e7b'), pageg: p('M3 1H10L13 4V15H3Z', '#ccc', '#999'), hammer: p('M2 15L9 6M5 3L10 1L15 6L12 8L8 4Z', '#333', K, 2),
  bulb: c(8, 6, 4.5, '#ffd163', '#bd7b14') + r(6, 10, 4, 4, '#a77b37', 'none'), lock: r(2, 8, 9, 6, '#efbd45', '#785316') + p('M8 8V4Q11 0 13 4V7', 'none', '#444', 1.6),
  hex: p('M5 1H11L15 8L11 15H5L1 8Z', '#333', K), sprout: p('M8 15V8M1 2L8 9L15 2M2 5L8 11L14 5M4 15H12', 'none', K, 2), leafd: p('M2 14Q4 3 14 2Q13 12 2 14Z', '#333', K), swirl: p('M3 4L9 1L13 7Q15 15 7 14Q1 12 3 8L9 8', 'none', K, 2), blob: p('M3 5L9 1L14 6L13 13L5 15L1 10Z', '#555', '#333'), tri: p('M1 6L15 2L10 15L7 9Z', '#777', '#333'), cut: p('M2 2L14 14M14 2L2 14', 'none', '#444', 2), swirl2: p('M14 3Q2 0 3 9Q8 16 13 10L8 7L4 13', 'none', K, 2), eyed: `<ellipse cx="8" cy="8" rx="7" ry="4" fill="#777" stroke="#333"/>` + c(8, 8, 2, K), person: c(8, 8, 6.5, '#eee', '#666') + p('M8 4V10M5 13L8 9L11 13', 'none', K, 1.5), globe: c(8, 9, 6, '#78aeca', '#467') + p('M2 8Q8 4 14 8', 'none', '#ddecc0', 3), stamp: c(8, 8, 6.5, '#888', '#444') + p('M4 5H12M8 5V13', 'none', K, 2),
  hang: r(1, 2, 14, 3, O, '#8a430c', .5) + r(1, 6, 5, 8, B, 'none') + r(8, 6, 3, 7, O, 'none') + p('M14 5V13', 'none', B, 2), roof: p('M2 7L8 1L14 7L11 11H4Z', O, '#8a430c') + p('M5 11L11 8L15 11L9 15Z', B, '#145694', .7), beam: p('M1 9L10 2L15 5V9L6 15L1 13Z', '#8a4519', '#4f220a', 1.3) + p('M2 10L12 4', 'none', O, 2), ramp: p('M6 3L12 1L14 7L8 9Z', B, '#145694') + r(1, 10, 14, 5, O, '#9a5410'), ring: c(8, 8, 6.5, '#cdddee', '#3b546d', 1.4) + c(8, 8, 3, B, '#154b7e'), frame: p('M8 1L14 13H10L8 9L6 13H2Z', B, '#333') + p('M4 4L1 14M12 4L15 14'), boat: p('M1 9H15L11 14H4ZM8 9V2', B, '#17659e', 1.2), dots: p('M8 6V2M8 9L3 13M8 9L13 13', 'none', '#6ba6de') + d([[3, 3], [13, 5], [4, 9], [3, 14], [13, 14]]),
  angle: p('M1 2L13 14M5 2L14 10', 'none', '#333', 1.2) + p('M6 4Q11 5 12 12L8 8Z', B, '#333', .8) + corners, bow: p('M1 14Q1 2 14 2', 'none', B, 2) + d([[1, 14], [4, 6], [14, 2]], K, 2), arcb: p('M2 2Q13 3 14 14L10 14Q9 7 2 6Z', '#8cc4f2', B, 1.4), zig: p('M2 5H10L5 11L14 10M7 1L10 5M4 14L5 11', 'none', O, 2) + d([[2, 5], [14, 10], [7, 1], [4, 14]]), steps: p('M2 3L7 5L4 10L12 13', 'none', '#c98d55') + d([[2, 3], [8, 4], [4, 9], [13, 7], [6, 13], [13, 14]], K, 1.9), arch: p('M2 14Q4 1 11 2L15 13L10 6Q5 6 2 14Z', '#f5b268', '#6d3c0b', 1.2),
  ringd: c(8, 8, 5.5, 'none', '#e6844b') + d([[8, 2], [3, 5], [13, 5], [3, 12], [13, 12]]), lined: p('M1 12L15 4', 'none', O) + d([[2, 12], [8, 8], [14, 4]], K, 1.7), pillow: p('M2 4L8 5L15 3L12 12L3 11Z', '#f07a12', '#c05a05') + d([[2, 3], [15, 3], [13, 13], [2, 12]], K, 1.7) + c(8, 8, 1.8, RD, 'none'), bug: c(8, 8, 5.5, '#f6b01e', '#6b320d', 1.4) + p('M9 3Q14 4 13 9L9 12Z', '#b3200d', 'none') + d([[5, 6], [6, 10]], K, 1.5) + corners,
  ballbar: c(7, 5, 4, B, '#174a78') + p('M1 14L14 11V14L2 16Z', O, '#99510e'), molecules: d([[3, 3], [12, 3], [6, 7], [13, 11], [3, 13], [9, 13]], B, 2.3) + d([[7, 3], [11, 7], [3, 8], [7, 11], [13, 14]], O, 2), folded: p('M1 3L6 5L7 14L2 10ZM7 9L10 2L15 3L11 13Z', B, '#15518c'), cubearrow: p('M1 8H6M11 8H15', 'none', O, 2) + p('M5 5L11 3L13 9L8 14L4 11Z', B, '#184e83'), mosaic: r(1, 1, 14, 14, '#20497c', '#123') + d([[4, 4], [9, 4], [13, 7], [4, 9], [8, 9], [11, 12], [5, 13]], O, 2.2), box: p('M1 8L12 6L15 9V13L4 15L1 13Z', '#ca6419', '#5c2a08') + p('M4 7L12 2', 'none', B, 2),
  spread: r(2, 3, 2, 10, O, 'none') + r(7, 3, 2, 10, K, 'none') + r(12, 3, 2, 10, O, 'none') + p('M0 8L4 5V11ZM16 8L12 5V11Z', O, 'none'), segment: p('M2 13L14 3', 'none', B, 2.5) + p('M1 10L4 15M12 1L15 5', 'none', '#37536c', 1.5), yjoint: p('M8 8V2M8 8L2 13M8 8L14 12M2 3L8 8', 'none', O, 2) + d([[8, 14], [2, 13], [14, 12]], K, 1.5), vbars: p('M4 2V14M10 2V14M2 3H6M2 13H6', 'none', B, 1.7) + d([[10, 3], [10, 8], [10, 13], [14, 3], [14, 8], [14, 13]], K, 1), hourglass: p('M2 2H14L4 14H14', 'none', K, 1.5) + p('M5 3L11 13', 'none', O, 2) + p('M12 4L4 13', 'none', B, 2), ruler: p('M1 5H15M3 3L1 5L3 7M13 3L15 5L13 7', 'none', B, 2) + r(1, 9, 14, 5, '#ddd', '#999') + p('M4 9V12M8 9V12M12 9V12', 'none', '#777'), fence: p('M2 3V14M6 3V13M10 2V13M14 2V13M1 12L15 10M1 5L15 3', 'none', '#236fae', 1.5), graph: p('M2 1V14H15', 'none', K, 1.3) + p('M3 13L7 5H14', 'none', '#b87739', 1.5), grille: p('M2 1V15M6 1V15M10 1V15M14 1V15', 'none', B, 2) + d([[2, 2], [6, 8], [10, 2], [14, 8], [2, 14], [10, 14]]),
  blobY: p('M1 9Q2 2 9 3Q16 5 14 10Q8 15 1 9Z', '#f3ce32', '#64563a', 1.4) + d([[3, 5], [8, 12], [13, 6]], B, 1.8), hexes: c(5, 5, 4, '#64b5dd', '#6c806d') + c(11, 11, 4, '#4a9bd9', O), fold: p('M1 5L5 3L8 6L14 4L12 12L8 14L5 11L2 13Z', '#59b7ec', '#2684b7'), sheet: p('M2 10L6 3H15L11 12Z', O, '#8a430c') + p('M5 10L9 4', 'none', B, 3), bubble: c(8, 8, 6, '#5bb6ef', '#346b8e') + corners, eraser: p('M1 11L10 4L15 7L6 14Z', '#f5a98a', '#c45a31'), balloon: c(9, 5, 4.5, '#f59b2b', '#bd650c') + p('M9 10L7 15', 'none', O, 1.5), netb: p('M1 3H15V12H11V8H5V13', 'none', '#3b78a8', 1.2) + d([[1, 3], [8, 3], [15, 3], [5, 13], [11, 13]], B, 1.8), slab: p('M1 7L14 4L12 11L2 15Z', O, '#8a430c') + p('M8 8V1', 'none', B, 2), flame: p('M8 1L13 7L14 12L7 14L2 9L7 8Z', O, '#8a430c'), wing: p('M1 12Q5 5 15 3L12 8L5 12Z', '#bcd6ea', '#477'), bucket: p('M2 4H14L12 14H4Z', B, '#277') + p('M1 3H15', 'none', K, 1.6), meshb: p('M2 2L14 14M14 2L2 14M8 1V15M1 8H15M4 4H12V12H4Z', 'none', '#1d588b', 1.6) + corners, blocks: r(1, 2, 7, 5, O, '#7c3d0c') + p('M6 9L13 8L15 14H7Z', O, '#7c3d0c') + p('M1 3L10 11', 'none', '#934a0b', 1.5), soap: p('M1 10L9 3L15 7L8 14Z', '#93d0f8', '#3b8cca'), spike: p('M8 1V8L1 13M8 8L15 12', 'none', '#2577bf', 1.8), rollb: p('M1 9Q8 1 15 6V11H6Z', B, '#16588e') + p('M2 12H14', 'none', O, 2), roofo: p('M1 14L8 2L15 14L9 10Z', O, '#82420c'), squareb: r(2, 2, 12, 12, B, '#184d81') + p('M8 2V14M2 8H14M5 5L11 11', 'none', '#12395f') + corners,
  anglesk: p('M13 4H4L2 3M4 4L6 1M14 8H5L3 7M13 12H7L5 11M10 4V6', 'none', '#333', 1.4) + d([[14, 4], [14, 12]]), floor: p('M1 9L10 6L15 10L6 14Z', O, '#814108') + p('M8 9V1', 'none', '#334', 1.5), pinfloor: p('M1 6L6 9L12 7L15 11L8 15L2 12Z', B, '#18588b') + p('M3 7V2M13 8V3', 'none', O, 2),
  anchor: c(8, 3, 2, 'none', B, 1.5) + p('M8 5V14M4 7H12M2 10Q3 14 8 14Q13 14 14 10', 'none', B, 1.6), anchorv: p('M3 2V13H14M4 12L12 4M7 7V13', 'none', '#5479a6', 1.3) + corners, magnet: p('M4 14L12 6Q14 2 9 3L2 10', 'none', O, 3.2) + p('M4 14L6 12', 'none', '#eee', 3), coil: c(9, 9, 5.5, B, '#104d80', 1.4) + c(10, 8, 2, '#93cbf4', '#104d80') + p('M1 3L7 8', 'none', B, 3), springs: p('M1 4Q5 1 5 5Q3 9 8 8Q8 13 13 11', 'none', '#549bd4', 1.8) + d([[2, 5], [13, 12], [9, 14]], '#555'), knot: p('M2 3L7 8L2 13M14 3L9 8L14 13', 'none', '#333', 1.3) + c(8, 8, 3, O, '#aa3d18'), dome: p('M2 12Q8 1 14 12M8 2V9', 'none', '#555', 1.4) + d([[2, 12], [5, 7], [8, 3], [11, 7], [14, 12]], K, 1.7), brick: r(2, 6, 12, 7, O, '#95510d', 1.2) + p('M2 9H14M6 6V3', 'none', '#95510d'),
  roo: r(1, 1, 14, 14, '#899', 'none') + roo + p('M1 14L4 11L6 14L8 11L11 14', 'none', RD, 1.2), rooN: r(1, 1, 14, 14, '#899', 'none') + roo + p('M1 13H15', 'none', '#333', 3), clickx: p('M6 4L14 12H10L12 16L9 16L8 12L6 14Z', '#fff', '#444') + p('M1 1L6 6M6 1L1 6', 'none', '#b81f19', 2), runner: c(10, 2, 2, '#444', 'none') + p('M9 4L5 9L8 11L5 16M8 10L12 15M8 5L13 9M8 5L2 8', 'none', '#444', 1.8), ear: r(1, 1, 14, 14, '#f6f2ef', 'none') + p('M5 8Q3 2 8 2Q13 3 11 8L8 14Q6 14 7 10Z', '#f3c4a4', '#b4643f'), roobar: c(8, 8, 7, '#a9d3ea', 'none') + p('M2 6H14M8 2V14', 'none', '#333', 1.8) + roo, rooplain: c(8, 8, 7, '#a9d3ea', 'none') + roo,
  checker: r(1, 1, 14, 14, B, '#235') + p('M4 4H12V12H4Z', O, '#e9d36c', 1.4) + p('M1 6H15M1 10H15M6 1V15M10 1V15', 'none', '#235', .8), saucer: p('M1 8Q8 2 15 8Q8 14 1 8Z', '#efad78', '#8b6547') + p('M4 6Q8 2 12 6', 'none', B, 1.4), oframe: r(2, 2, 12, 12, O, '#784213', 1.4) + r(5, 5, 6, 6, '#f6a656', '#99612d') + corners, meshb2: r(0, 0, 16, 16, '#2f93f0', '#1360ab') + p('M2 14L6 3L9 10L14 2M2 4L9 10L14 13', 'none', '#104c8a', 1.2) + corners, wheelo: c(8, 8, 6, B, '#275f88') + p('M8 2V14M2 8H14M4 4L12 12M12 4L4 12', 'none', O, 1.6), diamond: p('M8 2L15 8L8 14L1 8Z', '#f7ac36', '#99610d') + d([[8, 2], [15, 8], [8, 14], [1, 8]]), gridb: p('M2 2H14V14H2ZM6 2V14M10 2V14M2 6H14M2 10H14', '#dbe8f3', '#3876ab') + corners, weave: p('M1 8L9 2L15 8L7 14Z', '#eaa558', '#99611e') + p('M4 6L10 12M7 4L13 10', 'none', '#99611e'), broom: p('M14 1L8 8', 'none', O, 2.4) + p('M5 7L11 9L9 15L1 13Z', B, '#19598c'), lshape: p('M2 14V8H8V3H14V14Z', '#f39b25', '#905609', 1.3) + d([[2, 14], [14, 3], [14, 14]]), leafo: p('M1 14L3 7L14 2L11 10Z', O, '#84500e') + p('M1 14L13 3M6 6L7 12', 'none', '#84500e'), trio: c(5, 5, 4, '#e98924', '#99550d') + c(11, 6, 4, '#e98924', '#99550d') + c(8, 11, 4, '#e98924', '#99550d'), xmesh: r(1, 2, 14, 12, '#3fa2ee', '#143b60', 1.4) + p('M1 2L15 14M15 2L1 14M8 2V14', 'none', '#102b49', 1.2), quads: r(1, 1, 14, 14, '#f4ad3a', '#86500d') + p('M8 1V15M1 8H15', 'none', '#86500d') + d([[4, 4], [12, 4], [4, 12], [12, 12], [8, 8]], '#275e89', 1.6), striped: r(1, 2, 14, 12, '#b79a60', '#556') + p('M1 6H15M1 10H15', 'none', '#497c68', 1.4) + corners, spiral: p('M3 15V6Q5 1 10 3Q16 7 11 11Q6 13 7 8', 'none', '#d9700f', 4) + c(9, 7, 2, '#f7ae52', 'none'), fold2: p('M2 3L7 7V14L2 11ZM9 7L14 2V9L9 14Z', O, '#985611'), tris: p('M1 2L6 4L2 7ZM6 7L11 8L7 12ZM11 10L15 14L9 14Z', O, '#333', .8), mesho: r(0, 0, 16, 16, O, '#86500d', 1.2) + p('M1 14L7 2L15 14M1 5L15 9M7 2L9 14', 'none', '#6c3a05', 1.2), nodes: p('M3 3H13V13H3ZM8 3V13M3 8H13', 'none', '#333') + d([[3, 3], [8, 3], [13, 3], [3, 8], [8, 8], [13, 8], [3, 13], [8, 13], [13, 13]], '#1b6bb8', 1.7),
  pts: c(4, 5, 2.5, '#5caee3', '#215376') + c(11, 3, 2.2, '#5caee3', '#215376') + c(13, 10, 2.5, '#5caee3', '#215376') + c(6, 12, 2, '#5caee3', '#215376'), dashed: `<rect x="2" y="2" width="12" height="12" fill="none" stroke="${O}" stroke-width="2" stroke-dasharray="2 2"/>` + corners, cross4: p('M2 5L14 2L13 13L2 14ZM2 5L13 13M14 2L2 14', '#a8c8de', '#285e86', 1.3) + corners, stairs: p('M1 15L4 10L9 9L9 3L13 2V9L10 13Z', '#258bd7', '#17659e', 1.2) + p('M8 2H13M13 10L15 14H9', 'none', O, 2.4), boxarr: p('M2 2V14M14 2V14', 'none', '#333', 1.5) + p('M5 5H9V3L13 8L9 13V11H5Z', '#dbe8f1', '#3f89bc'), hull: p('M4 4L9 6L13 4L12 10L14 13L7 11L3 13Z', '#dcecf5', '#3d94c9', 1.2) + corners,
  open: p('M1 14V4H6L8 2H14V14Z', '#57a743', '#2d7122') + p('M1 14L5 7H16L13 14Z', '#8fda65', '#397e27'), save2: p('M1 1H13L15 3V15H1Z', '#3978b9', '#173d66', 1.3) + r(4, 1, 8, 6, '#ddd', 'none') + r(4, 10, 8, 5, '#9bc3e7', 'none'), extents: p('M1 6V1H6M10 1H15V6M15 10V15H10M6 15H1V10', 'none', K, 2.6) + r(6, 6, 4, 4, '#555', 'none'), eye: p('M0 8Q8 -1 16 8Q8 15 0 8Z', '#fff', '#345', 1.2) + c(8, 8, 4, '#3c8dc7', '#175583') + c(8, 8, 1.7, K, 'none'), pencil: p('M1 9Q2 4 6 7Q7 11 3 12L6 15', 'none', K, 1.4) + p('M6 13L10 3L15 1L14 6L8 14Z', '#df4b3c', '#8d1f13'),
  nopreview: c(8, 5, 4, '#ddd', '#777') + p('M2 9Q8 12 14 9V12Q8 17 2 12Z', '#333', K), wirecan: can('#fff', '#444'), redcan: can('#d82e27', '#8c1715') + p('M7 6L10 5', 'none', '#f6a49f', 1.5), greencan: can('#ddd', '#333') + p('M6 4L10 2L15 6L12 10Z', '#42b649', '#226c29'), half: c(8, 8, 6, '#fff', '#777', 1.3) + p('M9 2V14Q15 12 15 8Q14 3 9 2Z', O, '#9d5209'), blueball: c(8, 8, 6, '#398bd6', '#245f98') + c(6, 6, 2.5, '#acd5f5', 'none'),
  windows: p('M1 3L7 2V7.500H1ZM8 2L15 1V7.500H8ZM1 8.500H7V14L1 13ZM8 8.500H15V15L8 14Z', '#fff', 'none'), lens: c(10, 6, 4.5, 'none', '#333', 1.2) + p('M7 9L2 14', 'none', '#333', 1.3), taskview: r(2, 5, 7, 6, 'none', '#eee', 1.3) + p('M2 2H9M2 14H9M13 2V6M13 9V14', 'none', '#eee', 1.5), edge: p('M1 7Q4 0 10 1Q15 2 15 9H6Q7 15 14 12V15Q2 18 3 9Q4 6 8 4Q4 4 1 7ZM6 6H11Q9 3 6 6Z', '#148be3', 'none'), explorer: p('M1 3H6L8 5H15V14H1Z', '#f6cf63', '#c99628') + r(4, 9, 8, 5, '#4aaae1', 'none') + r(6, 11, 4, 3, '#f6cf63', 'none'), rhino6: r(0, 0, 16, 16, '#222', 'none') + p('M1 2L4 8L4 2L8 9L10 7L13 9L12 12L6 15L5 11L1 7Z', '#fff', '#ddd') + p('M14 1Q11 2 11 5Q12 7 14 6Q15 4 12 4', 'none', '#aaa', 1.2),
  store: p('M5 5V2H11V5M1 5H15L14 15H2Z', '#fff', '#fff', 1.2) + r(4, 7, 3, 3, RD, 'none') + r(8, 7, 3, 3, '#39a934', 'none') + r(4, 11, 3, 3, B, 'none') + r(8, 11, 3, 3, '#efba22', 'none'), dropbox: p('M1 4L4 2L8 5L4 7ZM15 4L12 2L8 5L12 7ZM1 10L4 7L8 10L4 12ZM15 10L12 7L8 10L12 12ZM5 13L8 11L11 13L8 15Z', '#fff', 'none'), bolt: p('M11 2L6 6Q4 8 7 8L9 8Q12 9 9 11L5 14', 'none', '#168dea', 2.4), mail: p('M1 6L8 1L15 6V14H1Z', '#fff', '#ddd') + p('M2 6H14L8 10Z', '#333', 'none'), palette: `<ellipse cx="8" cy="9" rx="7" ry="5" fill="#d6e6ed" stroke="#6796b2"/>` + d([[4, 8], [8, 6], [7, 12]], B, 1.8) + d([[11, 9]], RD, 2) + p('M7 10L14 1', 'none', O, 1.8), camtasia: r(1, 1, 14, 14, '#ef9b35', '#f9cc85') + p('M12 5Q5 1 4 8Q5 15 12 11', 'none', '#fff3db', 2.5), record: c(8, 8, 7, '#222', '#eee', 1.5) + c(8, 8, 4, '#ed1e16', 'none'), telegram: c(8, 8, 7, '#31a5dc', 'none') + p('M3 8L13 4L11 12L8 10L6 12V9Z', '#fff', 'none'),
  chrome: c(8, 8, 7, '#e13d2e', 'none') + p('M8 8L2 4Q-1 11 7 15Z', '#31a64c', 'none') + p('M8 8H15Q15 15 7 15Z', '#f6c931', 'none') + c(8, 8, 3, '#3f83df', '#fff', 1.2), python: r(3, 1, 11, 8, '#eee', '#ddd') + p('M1 14H15V10H7V2', 'none', '#2c5ba4', 2) + c(11, 5, 2.3, '#f5c62d', 'none'), monitor: r(1, 3, 14, 8, '#f2f2f2', '#fff') + p('M8 11V14M5 14H11', 'none', '#eee'),
  caret: p('M3 10L8 5L13 10', 'none', '#fff', 1.5), cloud: p('M1 13Q0 8 4 8Q5 3 9 5Q12 4 13 8Q16 9 15 13Z', '#fff', 'none'), battery: r(1, 4, 12, 8, 'none', '#eee', 1.5) + r(3, 6, 5, 4, '#eee', 'none') + p('M14 6V10', 'none', '#eee', 2), wifi: p('M2 14Q2 3 14 2M6 14Q6 7 14 6M10 14Q10 10 14 10', 'none', '#bbb', 1.5) + c(13, 13, 1.5, '#fff', 'none'), volume: p('M1 6H4L8 2V14L4 10H1Z', 'none', '#eee', 1.2) + p('M10 5Q12 8 10 11M12 3Q16 8 12 13', 'none', '#ccc', 1.2), note: p('M1 2H14V12H9L6 15V12H1Z', '#fff', '#fff') + p('M4 5H11M4 8H11', 'none', '#444')
};

const svg = name => `<svg class="glyph" viewBox="0 0 16 16" aria-hidden="true">${icons[name] || ''}</svg>`;

document.querySelectorAll('[data-icon]').forEach(el => {
  el.insertAdjacentHTML('afterbegin', svg(el.dataset.icon));
  if (el.tagName === 'BUTTON' && !el.getAttribute('aria-label')) el.setAttribute('aria-label', el.dataset.icon);
});
document.querySelectorAll('[data-icons]').forEach(el => {
  el.innerHTML = el.dataset.icons.split(' ').map(n =>
    n === '|' ? '<i class="sep"></i>' : n === '-' ? '<i></i>' : `<button aria-label="${n}">${svg(n)}</button>`).join('');
});

/* Construction plane: unit square projected onto its four screen corners. */
const [q0, q1, q2, q3] = [[98, 234], [401, 146], [571, 313], [204, 462]];
const sx = q0[0] - q1[0] + q2[0] - q3[0], sy = q0[1] - q1[1] + q2[1] - q3[1];
const dx1 = q1[0] - q2[0], dx2 = q3[0] - q2[0], dy1 = q1[1] - q2[1], dy2 = q3[1] - q2[1];
const det = dx1 * dy2 - dx2 * dy1;
const g = (sx * dy2 - dx2 * sy) / det, h = (dx1 * sy - sx * dy1) / det;
const at = (u, v) => {
  const w = g * u + h * v + 1;
  return [0, 1].map(k => (((q1[k] - q0[k] + g * q1[k]) * u + (q3[k] - q0[k] + h * q3[k]) * v + q0[k]) / w).toFixed(2)).join(' ');
};
let minor = '', major = '';
for (let i = 0; i <= 140; i++) {
  const t = i / 140, seg = `M${at(t, 0)}L${at(t, 1)}M${at(0, t)}L${at(1, t)}`;
  if (i % 5) minor += seg; else major += seg;
}
document.getElementById('grid').innerHTML = p(minor, 'none', 'rgba(125,128,136,.14)', .4) + p(major, 'none', 'rgba(112,115,123,.5)', .6);
```
